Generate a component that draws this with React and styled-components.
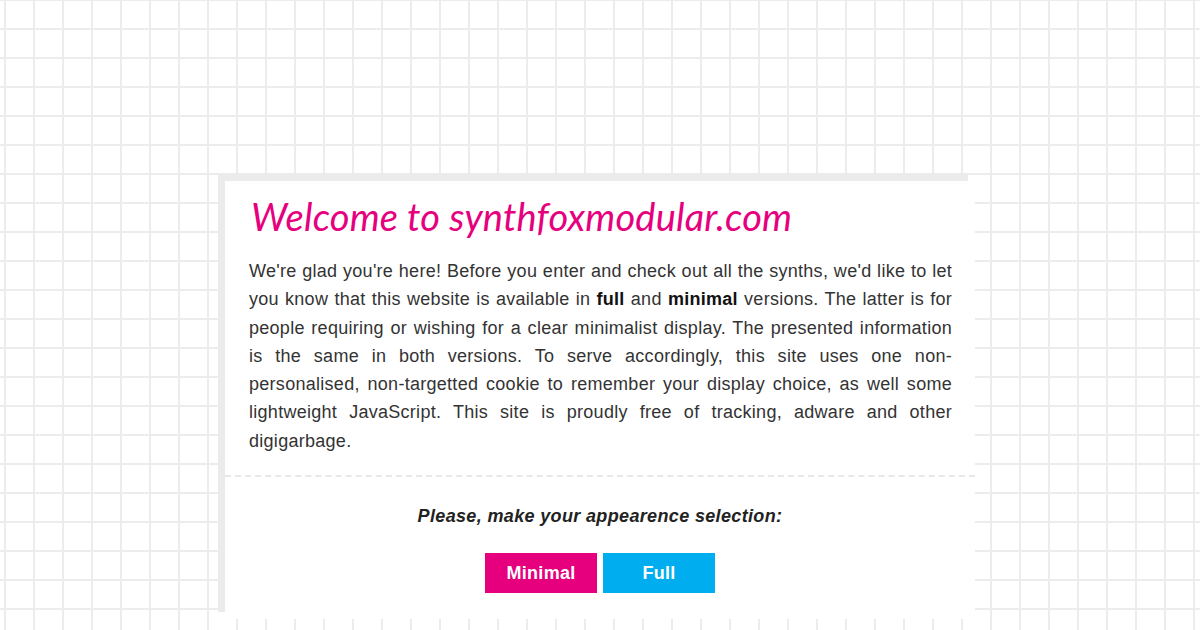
import styled, { createGlobalStyle } from 'styled-components'

const GlobalStyle = createGlobalStyle`
    html, body{
        margin: 0;
        padding: 0;
    }
    body{
        background-color: #ffffff;
        background-image:
            linear-gradient(to right, #ececec 2px, transparent 2px),
            linear-gradient(to bottom, #ececec 2px, transparent 2px);
        background-size: 29px 29px;
        background-position: 4px 28px;
        font-family: "Liberation Sans", Arial, sans-serif;
        color: #333333;
    }
`

const Page = styled.main`
    min-height: 630px;
    box-sizing: border-box;
    display: flex;
    justify-content: center;
    align-items: flex-start;
    padding-top: 181px;
`

const Card = styled.section`
    width: 750px;
    background: #ffffff;
    box-shadow: -7px -7px 0 #ebebeb;
`

const Intro = styled.div`
    padding: 13px 23px 20px 24px;

    h1{
        margin: 0 0 18px 2px;
        font-family: Lato, "Open Sans", sans-serif;
        font-style: italic;
        font-weight: 400;
        font-size: 38px;
        line-height: 45px;
        letter-spacing: 0.2px;
        color: #e6007e;
    }
    p{
        margin: 0;
        font-size: 18px;
        line-height: 28.3px;
        letter-spacing: 0.28px;
        text-align: justify;
        color: #333333;
    }
    b{
        color: #111111;
    }
`

const Selection = styled.div`
    border-top: 2px dashed #e8e8e8;
    padding: 27px 24px 26px;
    display: flex;
    flex-direction: column;
    align-items: center;
    gap: 25px;

    h2{
        margin: 0;
        font-size: 18px;
        line-height: 24px;
        letter-spacing: 0.35px;
        font-style: italic;
        font-weight: 700;
        color: #222222;
    }
`

const ButtonRow = styled.div`
    display: flex;
    gap: 6px;
`

const ChoiceButton = styled.button`
    width: 112px;
    height: 40px;
    border: none;
    border-radius: 0;
    background: ${({ $variant }) => $variant === 'minimal' ? '#e6007e' : '#00aeef'};
    color: #ffffff;
    font-family: "Liberation Sans", Arial, sans-serif;
    font-weight: 700;
    font-size: 18px;
    letter-spacing: 0.3px;
    cursor: pointer;
`

const App = () => {
    return <>
        <GlobalStyle />
        <Page>
            <Card>
                <Intro>
                    <h1>Welcome to synthfoxmodular.com</h1>
                    <p>
                        We're glad you're here! Before you enter and check out all the synths, we'd like to let
                        you know that this website is available in <b>full</b> and <b>minimal</b> versions. The latter is for
                        people requiring or wishing for a clear minimalist display. The presented information
                        is the same in both versions. To serve accordingly, this site uses one non-personalised,
                        non-targetted cookie to remember your display choice, as well some lightweight
                        JavaScript. This site is proudly free of tracking, adware and other digigarbage.
                    </p>
                </Intro>
                <Selection>
                    <h2>Please, make your appearence selection:</h2>
                    <ButtonRow>
                        <ChoiceButton $variant="minimal">Minimal</ChoiceButton>
                        <ChoiceButton $variant="full">Full</ChoiceButton>
                    </ButtonRow>
                </Selection>
            </Card>
        </Page>
    </>
}

export default App
